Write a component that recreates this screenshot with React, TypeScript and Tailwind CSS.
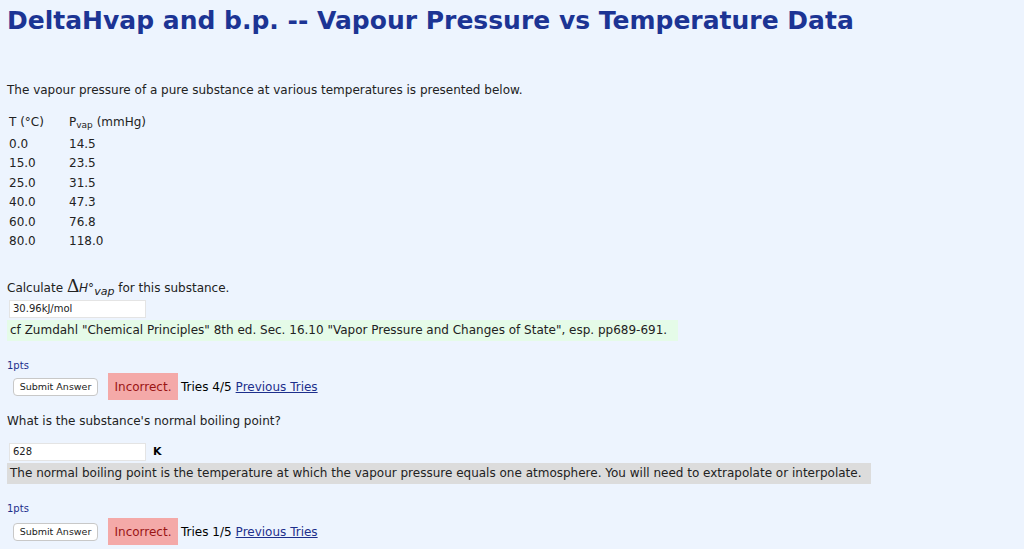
import React from "react";

const rows = [
  ["0.0", "14.5"],
  ["15.0", "23.5"],
  ["25.0", "31.5"],
  ["40.0", "47.3"],
  ["60.0", "76.8"],
  ["80.0", "118.0"],
];

const SubmitRow = ({ tries }: { tries: string }) => (
  <div className="flex items-center h-[27px] pl-[6px]">
    <button className="h-[18px] w-[85px] bg-white border border-[#c8c8c8] rounded-[4px] text-[9.5px] text-[#222] leading-none">
      Submit Answer
    </button>
    <span className="ml-[10px] h-[27px] w-[70px] flex items-center justify-center bg-[#f4a9a8] text-[#9a1515]">
      Incorrect.
    </span>
    <span className="ml-[3px] text-black">Tries {tries}</span>
    <a href="#" className="ml-[4px] text-[#1d2f8c] underline">
      Previous Tries
    </a>
  </div>
);

export default function App() {
  return (
    <div
      className="min-h-[549px] bg-[#edf4fe] text-[12px] text-[#222] px-[7px]"
      style={{ fontFamily: '"DejaVu Sans", Verdana, sans-serif' }}
    >
      <h1 className="pt-[6px] text-[25px] font-bold text-[#1c3494] leading-[30px]">
        DeltaHvap and b.p. -- Vapour Pressure vs Temperature Data
      </h1>

      <p className="mt-[46px] leading-[16px]">
        The vapour pressure of a pure substance at various temperatures is presented below.
      </p>

      <table className="mt-[12px] ml-[2px] border-separate border-spacing-0">
        <tbody>
          <tr className="h-[24px]">
            <td className="w-[60px] align-middle">T (°C)</td>
            <td>
              P<sub className="text-[9px]">vap</sub> (mmHg)
            </td>
          </tr>
          {rows.map(([t, p]) => (
            <tr key={t} className="h-[19.5px]">
              <td>{t}</td>
              <td>{p}</td>
            </tr>
          ))}
        </tbody>
      </table>

      <p className="mt-[25px] h-[20px] leading-[20px]">
        Calculate{" "}
        <span className="font-['Liberation_Serif'] text-[19px] leading-none">Δ</span>
        <i className="text-[12px]">H°</i>
        <sub className="italic text-[11px]">vap</sub> for this substance.
      </p>

      <div className="mt-[4px] ml-[2px] w-[137px] h-[18px] bg-white border border-[#e4e4e4] text-[10px] leading-[16px] px-[3px]">
        30.96kJ/mol
      </div>
      <div className="mt-[2px] w-[671px] h-[21px] bg-[#e5fbe8] leading-[21px] px-[3px]">
        cf Zumdahl "Chemical Principles" 8th ed. Sec. 16.10 "Vapor Pressure and Changes of State", esp. pp689-691.
      </div>

      <div className="mt-[19px] mb-[1px] text-[10px] text-[#1d2f8c] leading-[12px]">1pts</div>
      <SubmitRow tries="4/5" />

      <p className="mt-[13px] leading-[16px]">What is the substance's normal boiling point?</p>

      <div className="mt-[14px] flex items-center">
        <div className="ml-[2px] w-[137px] h-[18px] bg-white border border-[#e4e4e4] text-[10px] leading-[16px] px-[3px]">
          628
        </div>
        <b className="ml-[7px] text-[11px] text-black">K</b>
      </div>
      <div className="mt-[2px] w-[864px] h-[21px] bg-[#dcdcdc] leading-[21px] px-[3px]">
        The normal boiling point is the temperature at which the vapour pressure equals one atmosphere. You will need to extrapolate or interpolate.
      </div>

      <div className="mt-[19px] mb-[3px] text-[10px] text-[#1d2f8c] leading-[12px]">1pts</div>
      <SubmitRow tries="1/5" />
    </div>
  );
}
